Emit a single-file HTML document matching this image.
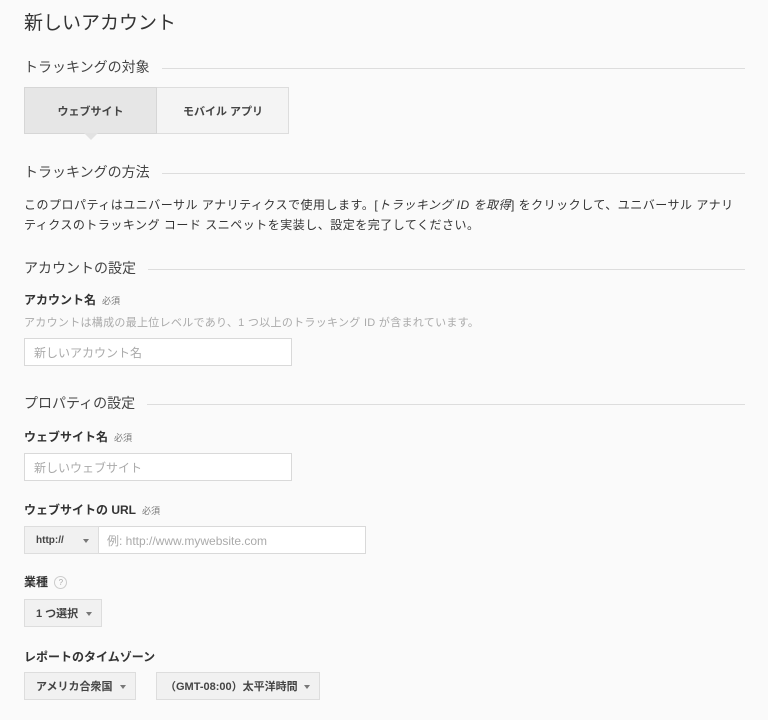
<!DOCTYPE html>
<html><head><meta charset="utf-8"><style>
*{margin:0;padding:0;box-sizing:border-box}
body{width:768px;height:720px;background:#fafafa;font-family:"Liberation Sans","Noto Sans CJK JP",sans-serif;color:#333;position:relative;overflow:hidden}
.a{position:absolute;white-space:nowrap}
.h{font-size:14px;color:#444;display:flex;align-items:center;left:24px;right:23px}
.h::after{content:"";flex:1;border-top:1px solid #ddd;margin-left:12px;margin-top:2px}
.lb{font-size:12px;font-weight:bold;color:#333}
.lb small{font-size:9px;font-weight:normal;color:#777;margin-left:6px}
.in{border:1px solid #d9d9d9;background:#fff;font-size:12px;color:#aaa;padding-left:9px;display:flex;align-items:center}
.sel{border:1px solid #ddd;background:#f1f1f1;font-size:11px;font-weight:bold;color:#444;display:flex;align-items:center;padding-left:11px}
.car{width:0;height:0;border-left:3.5px solid transparent;border-right:3.5px solid transparent;border-top:4px solid #777;position:absolute;right:9px;top:12px}
</style></head><body>
<div class="a" style="left:24px;top:8px;font-size:19px;color:#333">新しいアカウント</div>
<div class="a h" style="top:57px">トラッキングの対象</div>
<div class="a" style="left:24px;top:87px;width:265px;height:47px;border:1px solid #ddd;background:#f4f4f4"></div>
<div class="a" style="left:24px;top:87px;width:133px;height:47px;background:#e6e6e6;border:1px solid #d6d6d6;font-size:11px;font-weight:bold;color:#444;display:flex;align-items:center;justify-content:center">ウェブサイト</div>
<div class="a" style="left:157px;top:87px;width:132px;height:47px;font-size:11px;font-weight:bold;color:#444;display:flex;align-items:center;justify-content:center">モバイル アプリ</div>
<div class="a" style="left:84px;top:133px;width:0;height:0;border-left:7px solid transparent;border-right:7px solid transparent;border-top:7px solid #e2e2e2"></div>
<div class="a h" style="top:162px">トラッキングの方法</div>
<div class="a" style="left:24px;top:195px;font-size:12px;line-height:20px;color:#333;letter-spacing:0.5px">このプロパティはユニバーサル アナリティクスで使用します。[<i>トラッキング ID を取得</i>] をクリックして、ユニバーサル アナリ<br>ティクスのトラッキング コード スニペットを実装し、設定を完了してください。</div>
<div class="a h" style="top:258px">アカウントの設定</div>
<div class="a lb" style="left:24px;top:291px">アカウント名<small>必須</small></div>
<div class="a" style="left:24px;top:314px;font-size:11px;color:#aaa;letter-spacing:0.3px">アカウントは構成の最上位レベルであり、1 つ以上のトラッキング ID が含まれています。</div>
<div class="a in" style="left:24px;top:338px;width:268px;height:28px">新しいアカウント名</div>
<div class="a h" style="top:393px">プロパティの設定</div>
<div class="a lb" style="left:24px;top:428px">ウェブサイト名<small>必須</small></div>
<div class="a in" style="left:24px;top:453px;width:268px;height:28px">新しいウェブサイト</div>
<div class="a lb" style="left:24px;top:501px">ウェブサイトの URL<small>必須</small></div>
<div class="a in" style="left:24px;top:526px;width:342px;height:28px;padding-left:82px">例: http://www.mywebsite.com</div>
<div class="a sel" style="left:24px;top:526px;width:75px;height:28px;font-size:10px">http://<span class="car"></span></div>
<div class="a lb" style="left:24px;top:573px">業種 <span style="display:inline-block;width:13px;height:13px;border:1px solid #ccc;border-radius:50%;font-size:8px;color:#aaa;font-weight:normal;text-align:center;line-height:11px;vertical-align:middle;margin-left:3px">?</span></div>
<div class="a sel" style="left:24px;top:599px;width:78px;height:28px">1 つ選択<span class="car"></span></div>
<div class="a lb" style="left:24px;top:648px">レポートのタイムゾーン</div>
<div class="a sel" style="left:24px;top:672px;width:112px;height:28px">アメリカ合衆国<span class="car"></span></div>
<div class="a sel" style="left:156px;top:672px;width:164px;height:28px;padding-left:8px">（GMT-08:00）太平洋時間<span class="car"></span></div>
</body></html>
